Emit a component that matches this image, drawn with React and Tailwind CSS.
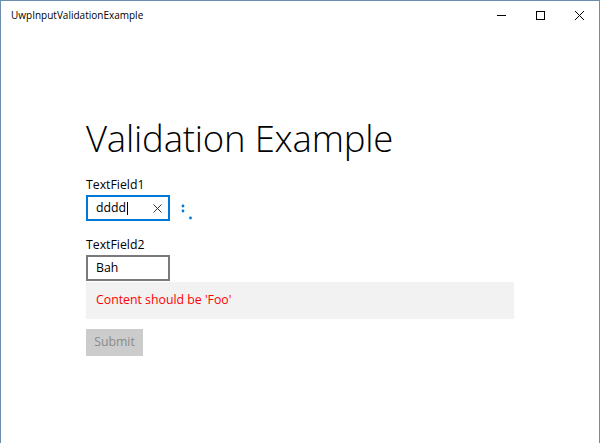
import React from "react";

const font = { fontFamily: '"Segoe UI", "Open Sans", "Noto Sans", sans-serif' };

const TitleBar = () => (
  <div className="flex h-[28px] items-center justify-between">
    <span className="pl-[10px] text-[10px] text-black">UwpInputValidationExample</span>
    <div className="flex h-full items-center">
      {/* minimize */}
      <div className="flex h-full w-[39px] items-center justify-center">
        <svg width="9" height="9" viewBox="0 0 9 9">
          <path d="M0 4.5h9" stroke="#000" strokeWidth="1" />
        </svg>
      </div>
      {/* maximize */}
      <div className="flex h-full w-[39px] items-center justify-center">
        <svg width="9" height="9" viewBox="0 0 9 9">
          <rect x="0.5" y="0.5" width="8" height="8" fill="none" stroke="#000" strokeWidth="1" />
        </svg>
      </div>
      {/* close */}
      <div className="flex h-full w-[39px] items-center justify-center">
        <svg width="9" height="9" viewBox="0 0 9 9">
          <path d="M0 0L9 9M9 0L0 9" stroke="#000" strokeWidth="1" />
        </svg>
      </div>
    </div>
  </div>
);

const BusyDots = () => (
  <svg width="12" height="18" viewBox="0 0 12 18" className="ml-[11px] mt-[9px] self-start">
    <circle cx="2" cy="2" r="1.4" fill="#0078d7" />
    <circle cx="2" cy="7" r="1.4" fill="#0078d7" />
    <circle cx="9.5" cy="14" r="1.4" fill="#0078d7" />
  </svg>
);

export default function App() {
  return (
    <div
      className="h-[443px] w-[600px] overflow-hidden border-x border-t border-[#6a8db0] bg-white"
      style={font}
    >
      <TitleBar />

      <div className="pl-[85px] pt-[86px]">
        <h1 className="text-[36.5px] font-light leading-[46px] tracking-[-0.2px] text-black">
          Validation Example
        </h1>

        <div className="mt-[15px] text-[12.3px] leading-[18px] text-black">TextField1</div>
        <div className="mt-[1px] flex items-start">
          <div className="flex h-[26px] w-[84px] items-center justify-between border-2 border-[#0078d7] pl-[8px] pr-[6px]">
            <span className="flex items-center text-[12.3px] text-black">
              dddd<span className="ml-[1px] inline-block h-[13px] w-px bg-black" />
            </span>
            <svg width="9" height="9" viewBox="0 0 9 9">
              <path d="M0.5 0.5L8.5 8.5M8.5 0.5L0.5 8.5" stroke="#333" strokeWidth="1" />
            </svg>
          </div>
          <BusyDots />
        </div>

        <div className="mt-[14px] text-[12.3px] leading-[18px] text-black">TextField2</div>
        <div className="mt-[1px] flex h-[26px] w-[84px] items-center border-2 border-[#7a7a7a] pl-[8px] text-[12.3px] text-black">
          Bah
        </div>

        <div className="mt-[1px] flex h-[37px] w-[428px] items-center bg-[#f2f2f2] pl-[10px] text-[12.3px] text-[#ff0000]">
          Content should be 'Foo'
        </div>

        <div className="mt-[10px] flex h-[27px] w-[57px] items-center justify-center bg-[#cccccc] text-[12.3px] text-[#8a8a8a]">
          Submit
        </div>
      </div>
    </div>
  );
}
